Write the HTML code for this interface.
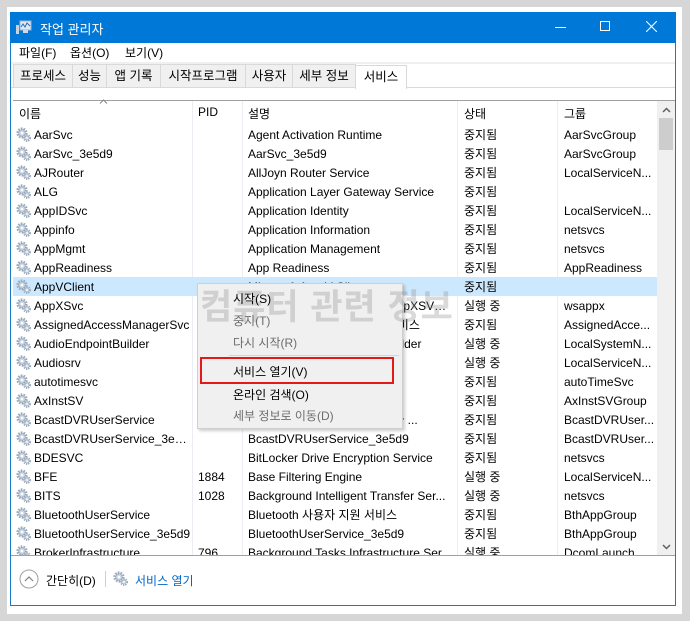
<!DOCTYPE html>
<html><head><meta charset="utf-8"><style>
*{margin:0;padding:0;box-sizing:border-box}
body{width:690px;height:621px;background:#d6d6d6;position:relative;overflow:hidden;font-family:"Liberation Sans","Noto Sans CJK KR",sans-serif;font-size:12px;color:#000}
.a{position:absolute;white-space:nowrap}
#frame{left:7px;top:7px;width:675px;height:607px;background:#fff}
#win{left:10px;top:12px;width:666px;height:594px;border:1px solid #1979ca;background:#fff}
#title{left:10px;top:12px;width:666px;height:31px;background:#0078d7;color:#fff}
.row{position:absolute;left:13px;width:644px;height:19px;line-height:19px}
.row span{position:absolute;overflow:hidden;text-overflow:ellipsis;white-space:nowrap}
.c1{left:21px;width:157px}.c2{left:185px;width:45px}.c3{left:235px;width:205px}.c4{left:451px;width:95px}.c5{left:551px;width:92px}
.g{position:absolute;left:3px;top:2px}
.tab{position:absolute;top:64px;height:23px;line-height:22px;background:#f0f0f0;border:1px solid #d9d9d9;border-bottom:none;text-align:center;font-size:12.5px}
.vl{position:absolute;top:101px;width:1px;height:454px;background:#eaeef3}
.mi{position:absolute;left:233px;font-size:12px}
</style></head><body>
<svg width="0" height="0" style="position:absolute"><defs>
<g id="gear">
<circle cx="6" cy="6" r="4.3" fill="none" stroke="#9aaabb" stroke-width="2.6" stroke-dasharray="1.6 1.1"/>
<circle cx="6" cy="6" r="3.3" fill="#ccd7e3" stroke="#9aaabb" stroke-width=".8"/>
<circle cx="6" cy="6" r="1.3" fill="#fff"/>
<circle cx="11" cy="11" r="3" fill="none" stroke="#9aaabb" stroke-width="2" stroke-dasharray="1.2 1"/>
<circle cx="11" cy="11" r="2.2" fill="#ccd7e3" stroke="#9aaabb" stroke-width=".6"/>
<circle cx="11" cy="11" r=".9" fill="#fff"/>
</g></defs></svg>
<div class="a" id="frame"></div>
<div class="a" id="win"></div>
<div class="a" id="title">
 <svg class="a" style="left:6px;top:8px" width="16" height="15"><rect x="4" y="1" width="11" height="9" fill="#dfe9f5" stroke="#9fb4cc"/><polyline points="5,7 7,4 9,7 11,3 14,6" fill="none" stroke="#2b6fb5" stroke-width="1"/><rect x="7" y="10" width="5" height="3" fill="#cfd8e3"/><rect x="0" y="5" width="3" height="9" fill="#c9d3de"/></svg>
 <div class="a" style="left:30px;top:7px;font-size:13px">작업 관리자</div>
 <div class="a" style="left:545px;top:15px;width:11px;height:1px;background:#fff"></div>
 <div class="a" style="left:590px;top:9px;width:10px;height:10px;border:1px solid #fff"></div>
 <svg class="a" style="left:636px;top:9px" width="11" height="11"><path d="M0 0L11 11M11 0L0 11" stroke="#fff" stroke-width="1.1"/></svg>
</div>
<div class="a" style="left:19px;top:44px">파일(F)</div>
<div class="a" style="left:70px;top:44px">옵션(O)</div>
<div class="a" style="left:125px;top:44px">보기(V)</div>
<div class="a" style="left:11px;top:62px;width:664px;height:25px;background:#fff;border-top:2px solid #f0f0f0"></div>
<div class="tab" style="left:13px;width:60px">프로세스</div>
<div class="tab" style="left:72px;width:35px">성능</div>
<div class="tab" style="left:106px;width:55px">앱 기록</div>
<div class="tab" style="left:160px;width:86px">시작프로그램</div>
<div class="tab" style="left:245px;width:48px">사용자</div>
<div class="tab" style="left:292px;width:64px">세부 정보</div>
<div class="tab" style="left:355px;top:65px;width:52px;height:24px;background:#fff">서비스</div>
<div class="a" style="left:11px;top:87px;width:664px;height:1px;background:#d9d9d9"></div>
<div class="a" style="left:356px;top:87px;width:50px;height:2px;background:#fff"></div>
<div class="a" style="left:13px;top:100px;width:662px;height:1px;background:#a0a0a0"></div>
<div class="vl" style="left:192px"></div><div class="vl" style="left:242px"></div><div class="vl" style="left:457px"></div><div class="vl" style="left:557px"></div>
<div class="a" style="left:657px;top:101px;width:18px;height:454px;background:#f0f0f0"></div>
<div class="a" style="left:659px;top:118px;width:14px;height:32px;background:#cdcdcd"></div>
<svg class="a" style="left:662px;top:107px" width="9" height="6"><path d="M1 5L4.5 1.5L8 5" fill="none" stroke="#606060" stroke-width="1.5"/></svg>
<svg class="a" style="left:662px;top:544px" width="9" height="6"><path d="M1 1L4.5 4.5L8 1" fill="none" stroke="#606060" stroke-width="1.5"/></svg>
<div class="a" style="left:19px;top:105px">이름</div>
<svg class="a" style="left:99px;top:99px" width="9" height="5"><path d="M1 4.5L4.5 1L8 4.5" fill="none" stroke="#888" stroke-width="1"/></svg>
<div class="a" style="left:198px;top:105px">PID</div>
<div class="a" style="left:248px;top:105px">설명</div>
<div class="a" style="left:464px;top:105px">상태</div>
<div class="a" style="left:564px;top:105px">그룹</div>
<div class="a" style="left:13px;top:124px;width:644px;height:431px;overflow:hidden">
<div style="position:absolute;left:0;top:153px;width:644px;height:19px;background:#cce8ff"></div>
<div id="rows"></div>
</div>
<script>
var d=[["AarSvc","","Agent Activation Runtime","중지됨","AarSvcGroup"],["AarSvc_3e5d9","","AarSvc_3e5d9","중지됨","AarSvcGroup"],["AJRouter","","AllJoyn Router Service","중지됨","LocalServiceN..."],["ALG","","Application Layer Gateway Service","중지됨",""],["AppIDSvc","","Application Identity","중지됨","LocalServiceN..."],["Appinfo","","Application Information","중지됨","netsvcs"],["AppMgmt","","Application Management","중지됨","netsvcs"],["AppReadiness","","App Readiness","중지됨","AppReadiness"],["AppVClient","","Microsoft App-V Client","중지됨",""],["AppXSvc","","AppX Deployment Servic (AppXSVC) xx","실행 중","wsappx"],["AssignedAccessManagerSvc","","AssignedAccessManager 서비스","중지됨","AssignedAcce..."],["AudioEndpointBuilder","","Windows Audio Endpoint Builder","실행 중","LocalSystemN..."],["Audiosrv","","Windows Audio","실행 중","LocalServiceN..."],["autotimesvc","","","중지됨","autoTimeSvc"],["AxInstSV","","","중지됨","AxInstSVGroup"],["BcastDVRUserService","","GameDVR 및 브로드캐 사용자 ...","중지됨","BcastDVRUser..."],["BcastDVRUserService_3e5d9","","BcastDVRUserService_3e5d9","중지됨","BcastDVRUser..."],["BDESVC","","BitLocker Drive Encryption Service","중지됨","netsvcs"],["BFE","1884","Base Filtering Engine","실행 중","LocalServiceN..."],["BITS","1028","Background Intelligent Transfer Ser...","실행 중","netsvcs"],["BluetoothUserService","","Bluetooth 사용자 지원 서비스","중지됨","BthAppGroup"],["BluetoothUserService_3e5d9","","BluetoothUserService_3e5d9","중지됨","BthAppGroup"],["BrokerInfrastructure","796","Background Tasks Infrastructure Ser...","실행 중","DcomLaunch"]];
var h="";d.forEach(function(r,i){h+='<div class="row" style="left:0;top:'+(1+19*i)+'px"><svg class="g" width="16" height="16"><use href="#gear"/></svg><span class="c1" style="top:1px">'+r[0]+'</span><span class="c2" style="top:1px">'+r[1]+'</span><span class="c3" style="top:1px">'+r[2]+'</span><span class="c4" style="top:1px">'+r[3]+'</span><span class="c5" style="top:1px">'+r[4]+'</span></div>'});
document.getElementById("rows").innerHTML=h;
</script>
<div class="a" style="left:11px;top:555px;width:664px;height:1px;background:#a0a0a0"></div>
<svg class="a" style="left:19px;top:569px" width="20" height="20"><circle cx="10" cy="10" r="9" fill="none" stroke="#a0a0a0"/><path d="M6 12L10 8L14 12" fill="none" stroke="#808080" stroke-width="1.2"/></svg>
<div class="a" style="left:46px;top:572px">간단히(D)</div>
<div class="a" style="left:105px;top:571px;width:1px;height:16px;background:#d0d0d0"></div>
<svg class="a" style="left:113px;top:571px" width="16" height="16"><use href="#gear"/></svg>
<div class="a" style="left:135px;top:572px;color:#0066cc">서비스 열기</div>
<div class="a" style="left:197px;top:283px;width:206px;height:146px;background:#f0f0f0;border:1px solid #cfcfcf;box-shadow:2px 2px 3px rgba(0,0,0,.2)"></div>
<div class="a" style="left:200px;top:279px;font-size:35px;font-weight:bold;color:rgba(140,140,140,.32);letter-spacing:1px">컴퓨터 관련 정보</div>
<div class="mi" style="top:290px">시작(S)</div>
<div class="mi" style="top:312px;color:#6d6d6d">중지(T)</div>
<div class="mi" style="top:334px;color:#6d6d6d">다시 시작(R)</div>
<div class="a" style="left:229px;top:355px;width:170px;height:1px;background:#d4d4d4"></div>
<div class="a" style="left:200px;top:357px;width:194px;height:27px;border:2px solid #e41a1a"></div>
<div class="mi" style="top:363px">서비스 열기(V)</div>
<div class="mi" style="top:386px">온라인 검색(O)</div>
<div class="mi" style="top:407px;color:#6d6d6d">세부 정보로 이동(D)</div>
</body></html>
